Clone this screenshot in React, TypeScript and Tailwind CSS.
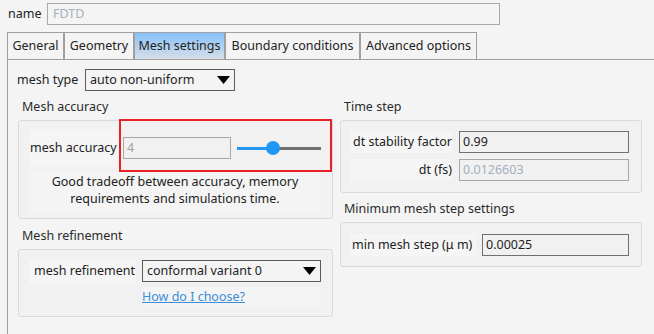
import type React from "react"

const font = { fontFamily: '"Noto Sans", "Open Sans", sans-serif' }

const Caret = () => (
  <svg width="13" height="8" viewBox="0 0 13 8" className="shrink-0">
    <path d="M0 0 H13 L6.5 8 Z" fill="#000" />
  </svg>
)

const Select: React.FC<{ value: string; className: string }> = ({ value, className }) => (
  <div className={`flex items-center justify-between h-[22px] border border-[#5a5a5a] bg-[#f4f4f4] pl-[4px] pr-[4px] ${className}`}>
    <span>{value}</span>
    <Caret />
  </div>
)

const GroupTitle: React.FC<{ children: React.ReactNode }> = ({ children }) => (
  <div className="pl-[4px] pt-[8px] pb-[5px] leading-[16px] text-[#2a2a2a]">{children}</div>
)

const Box: React.FC<{ className?: string; children: React.ReactNode }> = ({ className = "", children }) => (
  <div className={`border border-[#dadada] rounded-[3px] bg-[#f1f1f1] ${className}`}>{children}</div>
)

const tabs = [
  { name: "General", w: "w-[57px]" },
  { name: "Geometry", w: "w-[70px]" },
  { name: "Mesh settings", w: "w-[91px]", active: true },
  { name: "Boundary conditions", w: "w-[135px]" },
  { name: "Advanced options", w: "w-[117px]" },
]

export default function App() {
  return (
    <div style={font} className="w-[654px] h-[334px] overflow-hidden bg-[#f4f4f4] text-[12.5px] text-[#222]">
      <div className="flex items-center pt-[3px] pl-[8px]">
        <span className="w-[39px]">name</span>
        <div className="flex items-center w-[453px] h-[22px] border border-[#a8a8a8] pl-[5px] text-[#a3b0bd]">FDTD</div>
      </div>

      <div className="flex ml-[7px] mt-[7px]">
        {tabs.map((t) => (
          <div
            key={t.name}
            className={`flex items-center justify-center h-[27px] border border-b-0 border-[#a0a0a0] whitespace-nowrap ${t.w} ${
              t.active ? "bg-gradient-to-b from-[#86c1f9] to-[#d6dee6]" : "bg-[#f4f4f4]"
            }`}
          >
            {t.name}
          </div>
        ))}
      </div>

      <div className="ml-[7px] h-[280px] border-l border-t border-[#a0a0a0] pl-[10px]">
        <div className="flex items-center mt-[9px]">
          <span className="w-[68px] -ml-[1px]">mesh type</span>
          <Select value="auto non-uniform" className="w-[150px]" />
        </div>

        <div className="flex gap-[7px]">
          <div className="w-[315px]">
            <GroupTitle>Mesh accuracy</GroupTitle>
            <Box className="relative h-[99px] px-[10px] pt-[7px]">
              <div className="flex items-center h-[40px]">
                <div className="flex items-center h-[38px] w-[88px] bg-[#f5f5f5] pl-[1px] whitespace-nowrap">mesh accuracy</div>
                <div className="ml-[6px] flex items-center w-[108px] h-[22px] border border-[#a8a8a8] pl-[3px] text-[#a0a0a0]">
                  4
                </div>
                <div className="relative ml-[6px] w-[84px] h-[20px] flex items-center">
                  <div className="h-[3px] w-[36px] bg-[#2196f3]" />
                  <div className="h-[3px] flex-1 bg-[#707070]" />
                  <div className="absolute left-[29px] top-[3px] w-[14px] h-[14px] rounded-full bg-[#2196f3]" />
                </div>
              </div>
              <div className="mt-[3px] h-[41px] bg-[#f4f4f4] text-center leading-[17px] pt-[2px] w-[292px]">
                Good tradeoff between accuracy, memory
                <br />
                requirements and simulations time.
              </div>
              <div className="absolute left-[100px] top-[-2px] w-[213px] h-[53px] border-2 border-[#e8202a]" />
            </Box>

            <div className="pt-[1px]">
              <GroupTitle>Mesh refinement</GroupTitle>
            </div>
            <Box className="h-[68px] pl-[10px] pt-[9px]">
              <div className="flex items-center">
                <div className="flex items-center justify-end h-[24px] w-[107px] bg-[#f5f5f5] pr-[1px] whitespace-nowrap">mesh refinement</div>
                <Select value="conformal variant 0" className="ml-[6px] w-[179px]" />
              </div>
              <div className="ml-[113px] mt-[4px] w-[179px] h-[19px] bg-[#f4f4f4] leading-[19px]">
                <span className="text-[#3b8ddb] underline">How do I choose?</span>
              </div>
            </Box>
          </div>

          <div className="w-[302px]">
            <GroupTitle>Time step</GroupTitle>
            <Box className="h-[73px] pl-[9px] pt-[10px]">
              <div className="flex items-center">
                <div className="flex items-center justify-end h-[22px] w-[102px] bg-[#f5f5f5] whitespace-nowrap">dt stability factor</div>
                <div className="ml-[7px] flex items-center w-[170px] h-[22px] border border-[#707070] pl-[3px]">0.99</div>
              </div>
              <div className="flex items-center mt-[6px]">
                <div className="flex items-center justify-end h-[22px] w-[102px] bg-[#f5f5f5]">dt (fs)</div>
                <div className="ml-[7px] flex items-center w-[170px] h-[22px] border border-[#a8a8a8] pl-[3px] text-[#a3b0bd]">
                  0.0126603
                </div>
              </div>
            </Box>

            <GroupTitle>Minimum mesh step settings</GroupTitle>
            <Box className="h-[45px] pl-[9px] pt-[11px]">
              <div className="flex items-center">
                <div className="flex items-center h-[22px] w-[126px] bg-[#f5f5f5] pl-[2px] whitespace-nowrap">min mesh step (μ m)</div>
                <div className="ml-[6px] flex items-center w-[147px] h-[22px] border border-[#707070] pl-[3px]">0.00025</div>
              </div>
            </Box>
          </div>
        </div>
      </div>
    </div>
  )
}
